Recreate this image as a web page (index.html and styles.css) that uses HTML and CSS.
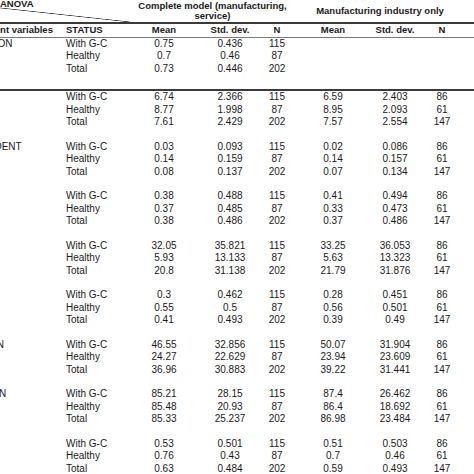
FILE: index.html
```html
<!DOCTYPE html>
<html>
<head>
<meta charset="utf-8">
<title>MANOVA descriptive statistics</title>
<link rel="stylesheet" href="styles.css">
</head>
<body>
<table class="stats">
  <colgroup>
    <col class="c-var"><col class="c-status"><col class="c-mean1"><col class="c-sd1"><col class="c-n1"><col class="c-mean2"><col class="c-sd2"><col class="c-n2">
  </colgroup>
  <thead>
    <tr class="h1">
      <th class="corner" colspan="2">MANOVA</th>
      <th class="grp grp1" colspan="3">Complete model (manufacturing,<br>service)</th>
      <th class="grp grp2" colspan="3">Manufacturing industry only</th>
    </tr>
    <tr class="h2">
      <th class="var">Dependent variables</th>
      <th class="status">STATUS</th>
      <th>Mean</th><th>Std. dev.</th><th>N</th>
      <th>Mean</th><th>Std. dev.</th><th class="last-col">N</th>
    </tr>
  </thead>
  <tbody class="grp first">
    <tr><td class="var">SITUATION</td><td class="status">With G-C</td><td>0.75</td><td>0.436</td><td>115</td><td></td><td></td><td class="last-col"></td></tr>
    <tr><td class="var"></td><td class="status">Healthy</td><td>0.7</td><td>0.46</td><td>87</td><td></td><td></td><td class="last-col"></td></tr>
    <tr><td class="var"></td><td class="status">Total</td><td>0.73</td><td>0.446</td><td>202</td><td></td><td></td><td class="last-col"></td></tr>
  </tbody>
  <tbody class="grp">
    <tr><td class="var"></td><td class="status">With G-C</td><td>6.74</td><td>2.366</td><td>115</td><td>6.59</td><td>2.403</td><td class="last-col">86</td></tr>
    <tr><td class="var"></td><td class="status">Healthy</td><td>8.77</td><td>1.998</td><td>87</td><td>8.95</td><td>2.093</td><td class="last-col">61</td></tr>
    <tr><td class="var"></td><td class="status">Total</td><td>7.61</td><td>2.429</td><td>202</td><td>7.57</td><td>2.554</td><td class="last-col">147</td></tr>
  </tbody>
  <tbody class="grp">
    <tr><td class="var">DEPENDENT</td><td class="status">With G-C</td><td>0.03</td><td>0.093</td><td>115</td><td>0.02</td><td>0.086</td><td class="last-col">86</td></tr>
    <tr><td class="var"></td><td class="status">Healthy</td><td>0.14</td><td>0.159</td><td>87</td><td>0.14</td><td>0.157</td><td class="last-col">61</td></tr>
    <tr><td class="var"></td><td class="status">Total</td><td>0.08</td><td>0.137</td><td>202</td><td>0.07</td><td>0.134</td><td class="last-col">147</td></tr>
  </tbody>
  <tbody class="grp">
    <tr><td class="var"></td><td class="status">With G-C</td><td>0.38</td><td>0.488</td><td>115</td><td>0.41</td><td>0.494</td><td class="last-col">86</td></tr>
    <tr><td class="var"></td><td class="status">Healthy</td><td>0.37</td><td>0.485</td><td>87</td><td>0.33</td><td>0.473</td><td class="last-col">61</td></tr>
    <tr><td class="var"></td><td class="status">Total</td><td>0.38</td><td>0.486</td><td>202</td><td>0.37</td><td>0.486</td><td class="last-col">147</td></tr>
  </tbody>
  <tbody class="grp">
    <tr><td class="var"></td><td class="status">With G-C</td><td>32.05</td><td>35.821</td><td>115</td><td>33.25</td><td>36.053</td><td class="last-col">86</td></tr>
    <tr><td class="var"></td><td class="status">Healthy</td><td>5.93</td><td>13.133</td><td>87</td><td>5.63</td><td>13.323</td><td class="last-col">61</td></tr>
    <tr><td class="var"></td><td class="status">Total</td><td>20.8</td><td>31.138</td><td>202</td><td>21.79</td><td>31.876</td><td class="last-col">147</td></tr>
  </tbody>
  <tbody class="grp">
    <tr><td class="var"></td><td class="status">With G-C</td><td>0.3</td><td>0.462</td><td>115</td><td>0.28</td><td>0.451</td><td class="last-col">86</td></tr>
    <tr><td class="var"></td><td class="status">Healthy</td><td>0.55</td><td>0.5</td><td>87</td><td>0.56</td><td>0.501</td><td class="last-col">61</td></tr>
    <tr><td class="var"></td><td class="status">Total</td><td>0.41</td><td>0.493</td><td>202</td><td>0.39</td><td>0.49</td><td class="last-col">147</td></tr>
  </tbody>
  <tbody class="grp">
    <tr><td class="var">DIVISION</td><td class="status">With G-C</td><td>46.55</td><td>32.856</td><td>115</td><td>50.07</td><td>31.904</td><td class="last-col">86</td></tr>
    <tr><td class="var"></td><td class="status">Healthy</td><td>24.27</td><td>22.629</td><td>87</td><td>23.94</td><td>23.609</td><td class="last-col">61</td></tr>
    <tr><td class="var"></td><td class="status">Total</td><td>36.96</td><td>30.883</td><td>202</td><td>39.22</td><td>31.441</td><td class="last-col">147</td></tr>
  </tbody>
  <tbody class="grp">
    <tr><td class="var">EROSION</td><td class="status">With G-C</td><td>85.21</td><td>28.15</td><td>115</td><td>87.4</td><td>26.462</td><td class="last-col">86</td></tr>
    <tr><td class="var"></td><td class="status">Healthy</td><td>85.48</td><td>20.93</td><td>87</td><td>86.4</td><td>18.692</td><td class="last-col">61</td></tr>
    <tr><td class="var"></td><td class="status">Total</td><td>85.33</td><td>25.237</td><td>202</td><td>86.98</td><td>23.484</td><td class="last-col">147</td></tr>
  </tbody>
  <tbody class="grp">
    <tr><td class="var"></td><td class="status">With G-C</td><td>0.53</td><td>0.501</td><td>115</td><td>0.51</td><td>0.503</td><td class="last-col">86</td></tr>
    <tr><td class="var"></td><td class="status">Healthy</td><td>0.76</td><td>0.43</td><td>87</td><td>0.7</td><td>0.46</td><td class="last-col">61</td></tr>
    <tr><td class="var"></td><td class="status">Total</td><td>0.63</td><td>0.484</td><td>202</td><td>0.59</td><td>0.493</td><td class="last-col">147</td></tr>
  </tbody>
</table>
</body>
</html>
```

FILE: styles.css
```css
html, body {
  margin: 0;
  padding: 0;
  background: #ffffff;
  overflow: hidden;
}

body {
  width: 474px;
  height: 474px;
}

.stats {
  margin-left: -73px;
  width: 553px;
  table-layout: fixed;
  border-collapse: separate;
  border-spacing: 0;
  font-family: "Liberation Sans", Arial, Helvetica, sans-serif;
  font-size: 10px;
  color: #1a1a1a;
}

.c-var { width: 139px; }
.c-status { width: 64px; }
.c-mean1 { width: 68px; }
.c-sd1 { width: 64px; }
.c-n1 { width: 30px; }
.c-mean2 { width: 82px; }
.c-sd2 { width: 42px; }
.c-n2 { width: 64px; }

th, td {
  padding: 0;
  line-height: 12.5px;
  text-align: center;
  vertical-align: top;
  white-space: nowrap;
}

th {
  font-size: 9.5px;
  font-weight: bold;
}

.h1 th {
  line-height: 10px;
  padding: 1px 0;
  vertical-align: middle;
  border-bottom: 2px solid #3a3a3a;
}

.h1 .corner {
  vertical-align: top;
  text-align: left;
  line-height: 8px;
  padding: 0 0 0 65px;
  background: linear-gradient(to top right,
    transparent calc(50% - 0.7px),
    #3a3a3a 50%,
    transparent calc(50% + 0.7px));
}

.h1 .grp1 { padding-left: 3px; }
.h1 .grp2 { padding-right: 12px; }

.h2 th {
  border-bottom: 1px solid #7a7a7a;
}

.var {
  text-align: left;
  padding-left: 33px;
}

.status {
  text-align: left;
}

.last-col {
  padding-right: 12px;
}

.grp tr:last-child td {
  padding-bottom: 12px;
}

.grp.first tr:last-child td {
  padding-bottom: 14px;
  border-bottom: 2px solid #3a3a3a;
}
```
